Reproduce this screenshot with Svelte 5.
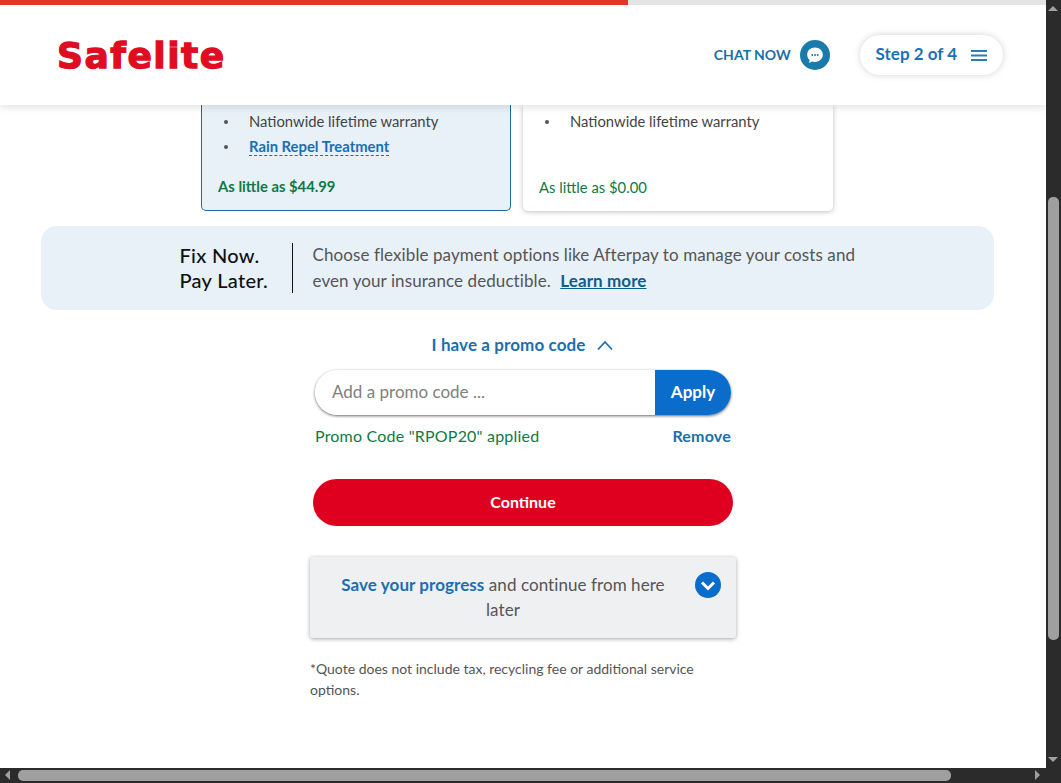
<script>
  const features = ['Nationwide lifetime warranty']
</script>

<div class="window">
  <div class="page">
    <header class="header">
      <div class="progress"><div class="progress-fill"></div></div>
      <div class="header-row">
        <a class="logo" href="#top">Safelite</a>
        <div class="header-actions">
          <span class="chat-label">CHAT NOW</span>
          <span class="chat-icon">
            <svg width="30" height="30" viewBox="0 0 30 30">
              <circle cx="15" cy="15" r="15" fill="#1a7aab" />
              <path d="M15 7.600c-4.400 0-7.800 3.100-7.800 7.200 0 2.100.9 3.900 2.400 5.200l-.5 3 3.200-1.500c.8.300 1.700.4 2.700.4 4.400 0 7.800-3.100 7.800-7.100S19.400 7.600 15 7.600z" fill="#fff" />
              <circle cx="12.300" cy="15" r="1" fill="#1a7aab" />
              <circle cx="15" cy="15" r="1" fill="#1a7aab" />
              <circle cx="17.700" cy="15" r="1" fill="#1a7aab" />
            </svg>
          </span>
          <button class="step-pill">
            <span>Step 2 of 4</span>
            <svg width="16" height="12" viewBox="0 0 16 12">
              <path d="M0 2h16M0 6.500h16M0 11h16" stroke="#2a7fb0" stroke-width="1.800" fill="none" />
            </svg>
          </button>
        </div>
      </div>
    </header>

    <main class="content">
      <div class="cards">
        <div class="card selected">
          <ul>
            {#each features as item}
              <li>{item}</li>
            {/each}
            <li><span class="link-dashed">Rain Repel Treatment</span></li>
          </ul>
          <p class="price strong">As little as $44.99</p>
        </div>
        <div class="card">
          <ul>
            {#each features as item}
              <li>{item}</li>
            {/each}
          </ul>
          <p class="price">As little as $0.00</p>
        </div>
      </div>

      <section class="banner">
        <div class="banner-title">Fix Now.<br />Pay Later.</div>
        <p class="banner-text">
          Choose flexible payment options like Afterpay to manage your costs and
          even your insurance deductible. <a class="learn" href="#top">Learn more</a>
        </p>
      </section>

      <div class="promo-toggle">
        <span>I have a promo code</span>
        <svg width="18" height="11" viewBox="0 0 18 11">
          <path d="M2 9.500l7-7.500 7 7.500" stroke="#1a6fb0" stroke-width="1.800" fill="none" />
        </svg>
      </div>

      <div class="promo-form">
        <div class="promo-input">Add a promo code ...</div>
        <button class="apply">Apply</button>
      </div>

      <div class="promo-status">
        <span class="applied">Promo Code "RPOP20" applied</span>
        <span class="remove">Remove</span>
      </div>

      <button class="continue">Continue</button>

      <div class="save">
        <p><span class="save-link">Save your progress</span> and continue from here later</p>
        <svg class="save-icon" width="26" height="26" viewBox="0 0 26 26">
          <circle cx="13" cy="13" r="13" fill="#0a6ccb" />
          <path d="M7 10.500l6 6 6-6" stroke="#fff" stroke-width="3" fill="none" />
        </svg>
      </div>

      <p class="note">*Quote does not include tax, recycling fee or additional service options.</p>
    </main>
  </div>

  <div class="vscroll">
    <span class="arrow up"></span>
    <div class="vthumb"></div>
    <span class="arrow down"></span>
  </div>
  <div class="hscroll">
    <span class="arrow left"></span>
    <div class="hthumb"></div>
    <span class="arrow right"></span>
  </div>
  <div class="corner"></div>
</div>

<style>
  :global(body) {
    margin: 0;
    background: #fff;
  }

  .window {
    display: grid;
    grid-template-columns: 1046px 15px;
    grid-template-rows: 768px 15px;
    width: 1061px;
    height: 783px;
    overflow: hidden;
    font-family: Lato, "Noto Sans", sans-serif;
    color: #444;
  }

  .page {
    overflow: hidden;
    background: #fff;
  }

  .header {
    position: relative;
    z-index: 2;
    height: 105px;
    background: #fff;
    box-shadow: 0 2px 8px rgba(0, 0, 0, 0.12);
  }

  .progress {
    height: 5px;
    background: #e4e4e4;
  }

  .progress-fill {
    width: 628px;
    height: 5px;
    background: #e5322a;
  }

  .header-row {
    display: flex;
    align-items: center;
    justify-content: space-between;
    height: 100px;
    padding: 0 43px 0 57px;
  }

  .logo {
    margin-top: 1px;
    font-family: "DejaVu Sans", sans-serif;
    font-size: 36px;
    font-weight: 700;
    letter-spacing: 1.500px;
    color: #df0c22;
    text-decoration: none;
    -webkit-text-stroke: 1.300px #df0c22;
  }

  .header-actions {
    display: flex;
    align-items: center;
  }

  .chat-label {
    margin-top: -2px;
    font-size: 14px;
    font-weight: 700;
    color: #1a6fa8;
  }

  .chat-icon {
    display: flex;
    margin: 0 30px 0 9px;
  }

  .step-pill {
    display: flex;
    align-items: center;
    gap: 14px;
    height: 40px;
    padding: 0 16px;
    border: none;
    border-radius: 20px;
    background: #fff;
    box-shadow: 0 0 7px rgba(0, 0, 0, 0.18);
    font-family: inherit;
    font-size: 17px;
    font-weight: 700;
    line-height: 18px;
    color: #1a72b4;
  }

  .step-pill span {
    margin-top: -2px;
  }

  .content {
    display: flex;
    flex-direction: column;
    align-items: center;
  }

  .cards {
    display: flex;
    gap: 12px;
    height: 106px;
    margin-right: 12px;
  }

  .card {
    display: flex;
    flex-direction: column;
    box-sizing: border-box;
    width: 310px;
    padding: 4px 16px 15px;
    border-radius: 0 0 5px 5px;
    background: #fff;
    box-shadow: 0 1px 5px rgba(0, 0, 0, 0.25);
  }

  .card.selected {
    border: 1px solid #1b6aa5;
    border-top: none;
    background: #e8f0f8;
    box-shadow: none;
  }

  .card ul {
    flex: 1;
    margin: 0;
    padding: 0 0 0 6px;
    list-style: none;
    font-size: 14.800px;
    line-height: 25px;
  }

  .card li {
    display: flex;
    align-items: center;
    gap: 21px;
  }

  .card li + li {
    margin-top: 3px;
  }

  .card li::before {
    content: "";
    width: 4px;
    height: 4px;
    border-radius: 50%;
    background: #555;
  }

  .link-dashed {
    font-weight: 700;
    line-height: 18px;
    color: #1a6fb0;
    border-bottom: 1px dashed #1a6fb0;
  }

  .price {
    margin: 0;
    font-size: 14.800px;
    color: #0e7a45;
  }

  .price.strong {
    font-weight: 700;
  }

  .banner {
    display: flex;
    align-items: center;
    justify-content: center;
    box-sizing: border-box;
    width: 953px;
    height: 84px;
    margin: 15px 0 0 -11px;
    padding-left: 2px;
    border-radius: 16px;
    background: #e8f0f8;
  }

  .banner-title {
    width: 112px;
    border-right: 1px solid #111;
    font-size: 20px;
    font-weight: 500;
    letter-spacing: 0.3px;
    line-height: 25px;
    color: #111;
  }

  .banner-text {
    width: 545px;
    margin: 0 0 0 20px;
    font-size: 17px;
    letter-spacing: 0.09px;
    line-height: 26px;
    color: #555;
  }

  .learn {
    margin-left: 5px;
    font-weight: 700;
    color: #0e5e8c;
  }

  .promo-toggle {
    display: flex;
    align-items: center;
    gap: 11px;
    margin: 25px 0 0 0;
    font-size: 17px;
    font-weight: 700;
    letter-spacing: 0.1px;
    line-height: 20px;
    color: #1a6fb0;
  }

  .promo-form {
    display: flex;
    width: 416px;
    height: 45px;
    margin-top: 15px;
    border-radius: 23px;
    box-shadow: 0 1px 3px rgba(0, 0, 0, 0.6);
    overflow: hidden;
  }

  .promo-input {
    flex: 1;
    display: flex;
    align-items: center;
    padding: 0 0 3px 17px;
    box-sizing: border-box;
    background: #fff;
    font-size: 17px;
    color: #808080;
  }

  .apply {
    width: 76px;
    padding: 0 0 2px;
    border: none;
    background: #0a6ccb;
    font-family: inherit;
    font-size: 17px;
    font-weight: 700;
    color: #fff;
  }

  .promo-status {
    display: flex;
    justify-content: space-between;
    width: 416px;
    margin-top: 10px;
    font-size: 16px;
    letter-spacing: 0.2px;
    line-height: 22px;
  }

  .applied {
    color: #0e7a45;
  }

  .remove {
    font-weight: 700;
    color: #1a6fa8;
  }

  .continue {
    width: 420px;
    height: 47px;
    margin-top: 32px;
    padding: 0 0 2px;
    border: none;
    border-radius: 24px;
    background: #df001f;
    font-family: inherit;
    font-size: 16px;
    font-weight: 700;
    color: #fff;
  }

  .save {
    display: flex;
    align-items: flex-start;
    box-sizing: border-box;
    width: 426px;
    height: 81px;
    margin-top: 31px;
    padding: 15px 15px 0 26px;
    border-radius: 3px;
    background: #eff0f2;
    box-shadow: 0 1px 4px rgba(0, 0, 0, 0.35);
  }

  .save p {
    flex: 1;
    margin: 0;
    padding-right: 25px;
    font-size: 17px;
    letter-spacing: 0.07px;
    line-height: 25px;
    text-align: center;
    color: #555;
  }

  .save-link {
    font-weight: 700;
    color: #1a6fb0;
  }

  .save-icon {
    flex: none;
  }

  .note {
    width: 426px;
    margin: 20px 0 0;
    font-size: 14px;
    line-height: 21px;
    color: #555;
  }

  .vscroll {
    position: relative;
    background: #2b2b2b;
  }

  .vthumb {
    position: absolute;
    top: 197px;
    left: 2px;
    width: 11px;
    height: 443px;
    border-radius: 5px;
    background: #9f9f9f;
  }

  .hscroll {
    position: relative;
    background: #2b2b2b;
  }

  .hthumb {
    position: absolute;
    top: 2px;
    left: 18px;
    width: 933px;
    height: 11px;
    border-radius: 5px;
    background: #9f9f9f;
  }

  .corner {
    background: #2b2b2b;
  }

  .arrow {
    position: absolute;
    width: 0;
    height: 0;
    border: 5px solid transparent;
  }

  .arrow.up {
    top: 1px;
    left: 2px;
    border-bottom-color: #a0a0a0;
  }

  .arrow.down {
    bottom: 1px;
    left: 2px;
    border-top-color: #a0a0a0;
  }

  .arrow.left {
    top: 2px;
    left: 0;
    border-right-color: #a0a0a0;
  }

  .arrow.right {
    top: 2px;
    right: 1px;
    border-left-color: #a0a0a0;
  }
</style>
